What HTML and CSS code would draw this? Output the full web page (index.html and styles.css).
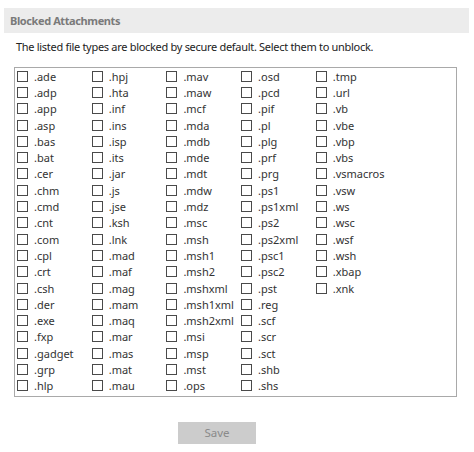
FILE: index.html
```html
<!DOCTYPE html>
<html>
<head>
<meta charset="utf-8">
<link rel="stylesheet" href="styles.css">
</head>
<body>
<div class="page">
  <div class="header">Blocked Attachments</div>
  <div class="desc">The listed file types are blocked by secure default. Select them to unblock.</div>
  <div class="list">
    <div class="item"><span class="box"></span>.ade</div>
    <div class="item"><span class="box"></span>.adp</div>
    <div class="item"><span class="box"></span>.app</div>
    <div class="item"><span class="box"></span>.asp</div>
    <div class="item"><span class="box"></span>.bas</div>
    <div class="item"><span class="box"></span>.bat</div>
    <div class="item"><span class="box"></span>.cer</div>
    <div class="item"><span class="box"></span>.chm</div>
    <div class="item"><span class="box"></span>.cmd</div>
    <div class="item"><span class="box"></span>.cnt</div>
    <div class="item"><span class="box"></span>.com</div>
    <div class="item"><span class="box"></span>.cpl</div>
    <div class="item"><span class="box"></span>.crt</div>
    <div class="item"><span class="box"></span>.csh</div>
    <div class="item"><span class="box"></span>.der</div>
    <div class="item"><span class="box"></span>.exe</div>
    <div class="item"><span class="box"></span>.fxp</div>
    <div class="item"><span class="box"></span>.gadget</div>
    <div class="item"><span class="box"></span>.grp</div>
    <div class="item"><span class="box"></span>.hlp</div>

    <div class="item"><span class="box"></span>.hpj</div>
    <div class="item"><span class="box"></span>.hta</div>
    <div class="item"><span class="box"></span>.inf</div>
    <div class="item"><span class="box"></span>.ins</div>
    <div class="item"><span class="box"></span>.isp</div>
    <div class="item"><span class="box"></span>.its</div>
    <div class="item"><span class="box"></span>.jar</div>
    <div class="item"><span class="box"></span>.js</div>
    <div class="item"><span class="box"></span>.jse</div>
    <div class="item"><span class="box"></span>.ksh</div>
    <div class="item"><span class="box"></span>.lnk</div>
    <div class="item"><span class="box"></span>.mad</div>
    <div class="item"><span class="box"></span>.maf</div>
    <div class="item"><span class="box"></span>.mag</div>
    <div class="item"><span class="box"></span>.mam</div>
    <div class="item"><span class="box"></span>.maq</div>
    <div class="item"><span class="box"></span>.mar</div>
    <div class="item"><span class="box"></span>.mas</div>
    <div class="item"><span class="box"></span>.mat</div>
    <div class="item"><span class="box"></span>.mau</div>

    <div class="item"><span class="box"></span>.mav</div>
    <div class="item"><span class="box"></span>.maw</div>
    <div class="item"><span class="box"></span>.mcf</div>
    <div class="item"><span class="box"></span>.mda</div>
    <div class="item"><span class="box"></span>.mdb</div>
    <div class="item"><span class="box"></span>.mde</div>
    <div class="item"><span class="box"></span>.mdt</div>
    <div class="item"><span class="box"></span>.mdw</div>
    <div class="item"><span class="box"></span>.mdz</div>
    <div class="item"><span class="box"></span>.msc</div>
    <div class="item"><span class="box"></span>.msh</div>
    <div class="item"><span class="box"></span>.msh1</div>
    <div class="item"><span class="box"></span>.msh2</div>
    <div class="item"><span class="box"></span>.mshxml</div>
    <div class="item"><span class="box"></span>.msh1xml</div>
    <div class="item"><span class="box"></span>.msh2xml</div>
    <div class="item"><span class="box"></span>.msi</div>
    <div class="item"><span class="box"></span>.msp</div>
    <div class="item"><span class="box"></span>.mst</div>
    <div class="item"><span class="box"></span>.ops</div>

    <div class="item"><span class="box"></span>.osd</div>
    <div class="item"><span class="box"></span>.pcd</div>
    <div class="item"><span class="box"></span>.pif</div>
    <div class="item"><span class="box"></span>.pl</div>
    <div class="item"><span class="box"></span>.plg</div>
    <div class="item"><span class="box"></span>.prf</div>
    <div class="item"><span class="box"></span>.prg</div>
    <div class="item"><span class="box"></span>.ps1</div>
    <div class="item"><span class="box"></span>.ps1xml</div>
    <div class="item"><span class="box"></span>.ps2</div>
    <div class="item"><span class="box"></span>.ps2xml</div>
    <div class="item"><span class="box"></span>.psc1</div>
    <div class="item"><span class="box"></span>.psc2</div>
    <div class="item"><span class="box"></span>.pst</div>
    <div class="item"><span class="box"></span>.reg</div>
    <div class="item"><span class="box"></span>.scf</div>
    <div class="item"><span class="box"></span>.scr</div>
    <div class="item"><span class="box"></span>.sct</div>
    <div class="item"><span class="box"></span>.shb</div>
    <div class="item"><span class="box"></span>.shs</div>

    <div class="item"><span class="box"></span>.tmp</div>
    <div class="item"><span class="box"></span>.url</div>
    <div class="item"><span class="box"></span>.vb</div>
    <div class="item"><span class="box"></span>.vbe</div>
    <div class="item"><span class="box"></span>.vbp</div>
    <div class="item"><span class="box"></span>.vbs</div>
    <div class="item"><span class="box"></span>.vsmacros</div>
    <div class="item"><span class="box"></span>.vsw</div>
    <div class="item"><span class="box"></span>.ws</div>
    <div class="item"><span class="box"></span>.wsc</div>
    <div class="item"><span class="box"></span>.wsf</div>
    <div class="item"><span class="box"></span>.wsh</div>
    <div class="item"><span class="box"></span>.xbap</div>
    <div class="item"><span class="box"></span>.xnk</div>
  </div>
  <div class="actions">
    <button class="save" type="button">Save</button>
  </div>
</div>
</body>
</html>
```
FILE: styles.css
```css
html, body {
  margin: 0;
  padding: 0;
  background: #ffffff;
}
.page {
  font-family: "Noto Sans", "Open Sans", sans-serif;
  padding-top: 8px;
}
.header {
  margin: 0 5px 0 4px;
  height: 25px;
  line-height: 26px;
  background: #ececec;
  padding-left: 6px;
  font-size: 11px;
  letter-spacing: -0.4px;
  font-weight: bold;
  color: #7a7a7a;
}
.desc {
  margin: 6px 0 0 16px;
  font-size: 11px;
  letter-spacing: -0.3px;
  line-height: 16px;
  color: #222;
}
.list {
  margin: 12px 0 0 14px;
  width: 439px;
  border: 1px solid #a9a9a9;
  padding: 0 0 0 2px;
  box-sizing: content-box;
  display: grid;
  grid-auto-flow: column;
  grid-template-rows: repeat(20, 16.3px);
  grid-template-columns: repeat(5, 74.7px);
  align-content: start;
  height: 328px;
}
.item {
  display: flex;
  align-items: center;
  font-size: 11px;
  color: #333;
  white-space: nowrap;
}
.box {
  width: 9px;
  height: 9px;
  border: 1px solid #4a4a4a;
  margin-right: 6px;
  flex: none;
}
.actions {
  margin: 23px 0 0 178px;
}
.save {
  width: 78px;
  height: 22px;
  border: none;
  background: #cccccc;
  color: #8a8a8a;
  font-family: "Noto Sans", "Open Sans", sans-serif;
  font-size: 11.5px;
  padding: 0;
}
```
